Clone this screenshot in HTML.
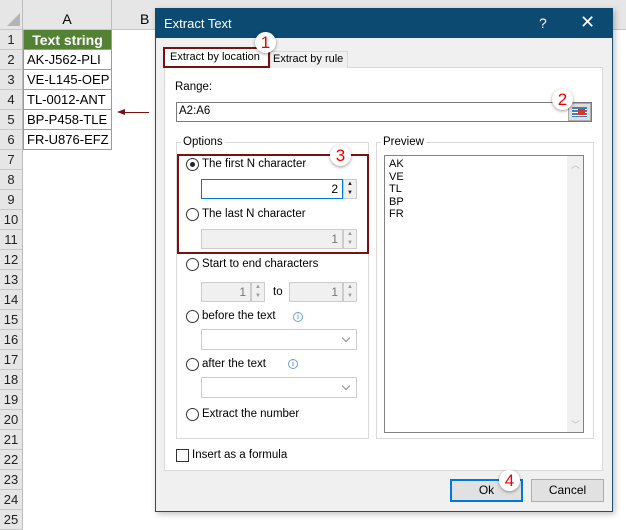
<!DOCTYPE html><html><head><style>
*{box-sizing:border-box;margin:0;padding:0}
body{width:626px;height:521px;position:relative;overflow:hidden;background:#fff;font-family:"Liberation Sans",sans-serif;font-size:12px;color:#000}
.a{position:absolute}
.rh{position:absolute;left:0;width:23px;height:20px;background:#e6e6e6;border-bottom:1px solid #c8c8c8;border-right:1px solid #bdbdbd;text-align:center;font-size:13px;line-height:20px;color:#222}
.cell{position:absolute;left:23px;width:89px;height:20px;border:1px solid #9a9a9a;border-top:none;font-size:13px;line-height:20px;padding-left:3px;white-space:nowrap;overflow:hidden}
.t{position:absolute;font-size:11.5px;white-space:nowrap}
.radio{position:absolute;width:13px;height:13px;border:1px solid #333;border-radius:50%;background:#fff}
.inp{position:absolute;height:20px;border:1px solid #adadad;background:#fff;text-align:right;padding-right:4px;line-height:18px}
.dis{background:#f0f0f0;border-color:#ccc;color:#777}
.spin{position:absolute;width:14px;height:20px;border:1px solid #ccc;background:#f0f0f0;font-size:6px;color:#999;text-align:center;line-height:9px}
.badge{position:absolute;width:21px;height:21px;border-radius:50%;background:#fff;box-shadow:0 1px 3px rgba(0,0,0,.4);color:#e00;font-size:17px;text-align:center;line-height:21px}
.info{position:absolute;width:10px;height:10px;border:1px solid #6a9fd4;border-radius:50%;color:#4a86c8;font-size:8px;line-height:8px;text-align:center;font-family:"Liberation Serif",serif}
.dd{position:absolute;height:21px;border:1px solid #ccc;background:#fff}
.dd:after{content:"";position:absolute;right:7px;top:5px;width:5px;height:5px;border-right:1px solid #888;border-bottom:1px solid #888;transform:rotate(45deg)}
</style></head><body>
<div class="a" style="left:0;top:0;width:626px;height:30px;background:#e6e6e6;border-bottom:1px solid #c8c8c8"></div>
<div class="a" style="left:0;top:0;width:23px;height:30px;border-right:1px solid #bdbdbd"></div>
<div class="a" style="left:7px;top:13px;width:0;height:0;border-left:13px solid transparent;border-bottom:13px solid #b5b5b5"></div>
<div class="a" style="left:23px;top:0;width:89px;height:30px;border-right:1px solid #bdbdbd;text-align:center;line-height:38px;font-size:14px">A</div>
<div class="a" style="left:112px;top:0;width:60px;height:30px;line-height:38px;padding-left:28px;font-size:14px">B</div>
<div class="rh" style="top:30px">1</div><div class="rh" style="top:50px">2</div><div class="rh" style="top:70px">3</div><div class="rh" style="top:90px">4</div><div class="rh" style="top:110px">5</div><div class="rh" style="top:130px">6</div><div class="rh" style="top:150px">7</div><div class="rh" style="top:170px">8</div><div class="rh" style="top:190px">9</div><div class="rh" style="top:210px">10</div><div class="rh" style="top:230px">11</div><div class="rh" style="top:250px">12</div><div class="rh" style="top:270px">13</div><div class="rh" style="top:290px">14</div><div class="rh" style="top:310px">15</div><div class="rh" style="top:330px">16</div><div class="rh" style="top:350px">17</div><div class="rh" style="top:370px">18</div><div class="rh" style="top:390px">19</div><div class="rh" style="top:410px">20</div><div class="rh" style="top:430px">21</div><div class="rh" style="top:450px">22</div><div class="rh" style="top:470px">23</div><div class="rh" style="top:490px">24</div><div class="rh" style="top:510px">25</div>
<div class="cell" style="top:30px;background:#548235;color:#fff;font-weight:bold;text-align:center;padding:0;font-size:14px">Text string</div>
<div class="cell" style="top:50px">AK-J562-PLI</div>
<div class="cell" style="top:70px">VE-L145-OEP</div>
<div class="cell" style="top:90px">TL-0012-ANT</div>
<div class="cell" style="top:110px">BP-P458-TLE</div>
<div class="cell" style="top:130px">FR-U876-EFZ</div>
<div class="a" style="left:122px;top:112px;width:27px;height:1px;background:#7b1010"></div>
<div class="a" style="left:117px;top:109px;width:0;height:0;border-top:3.5px solid transparent;border-bottom:3.5px solid transparent;border-right:8px solid #7b1010"></div>
<div class="a" style="left:155px;top:8px;width:458px;height:504px;background:#f0f0f0;border:1px solid #1d4f75;box-shadow:2px 2px 6px rgba(0,0,0,.25)"></div>
<div class="a" style="left:155px;top:8px;width:458px;height:30px;background:#0d4a72"></div>
<div class="t" style="left:164px;top:16px;color:#fff;font-size:13px">Extract Text</div>
<div class="t" style="left:539px;top:15px;color:#fff;font-size:14px">?</div>
<div class="t" style="left:580px;top:12px;color:#fff;font-size:18px">✕</div>
<div class="a" style="left:164px;top:67px;width:439px;height:404px;background:#fff;border:1px solid #d9d9d9"></div>
<div class="a" style="left:270px;top:51px;width:78px;height:17px;background:#f0f0f0;border:1px solid #d9d9d9;border-bottom:none"></div>
<div class="t" style="left:273px;top:53px;font-size:11px">Extract by rule</div>
<div class="a" style="left:163px;top:47px;width:107px;height:21px;background:#fff;border:2px solid #7b1010"></div>
<div class="t" style="left:170px;top:51px;font-size:11px">Extract by location</div>
<div class="t" style="left:175px;top:81px">Range:</div>
<div class="a" style="left:176px;top:102px;width:416px;height:20px;border:1px solid #7a7a7a;background:#fff"></div>
<div class="t" style="left:179px;top:105px">A2:A6</div>
<div class="a" style="left:568px;top:103px;width:23px;height:18px;background:#ddd;border:1px solid #aaa"></div>
<div class="a" style="left:572px;top:107px;width:15px;height:10px;background:repeating-linear-gradient(#4a7ab8 0 2px,#fff 2px 3px)"></div>
<div class="a" style="left:578px;top:109px;width:7px;height:6px;background:#d03a2a"></div>
<div class="a" style="left:176px;top:142px;width:193px;height:297px;border:1px solid #d9d9d9"></div>
<div class="t" style="left:181px;top:136px;background:#fff;padding:0 2px">Options</div>
<div class="a" style="left:376px;top:142px;width:218px;height:297px;border:1px solid #d9d9d9"></div>
<div class="t" style="left:381px;top:136px;background:#fff;padding:0 2px">Preview</div>
<div class="a" style="left:384px;top:155px;width:200px;height:278px;border:1px solid #828282;background:#fff"></div>
<div class="a" style="left:567px;top:156px;width:16px;height:276px;background:#f0f0f0"></div>
<div class="t" style="left:571px;top:158px;color:#bbb;font-size:9px">︿</div>
<div class="t" style="left:571px;top:418px;color:#bbb;font-size:9px">﹀</div>
<div class="t" style="left:389px;top:158px;font-size:11px;line-height:12.5px">AK<br>VE<br>TL<br>BP<br>FR</div>
<div class="a" style="left:177px;top:154px;width:192px;height:100px;border:2px solid #7b1010"></div>
<div class="radio" style="left:186px;top:158px"><div class="a" style="left:3px;top:3px;width:5px;height:5px;border-radius:50%;background:#222"></div></div>
<div class="t" style="left:202px;top:158px">The first N character</div>
<div class="inp" style="left:201px;top:179px;width:142px;border-color:#0078d7;color:#000">2</div>
<div class="spin" style="left:343px;top:179px;color:#222">▲<br>▼</div>
<div class="radio" style="left:186px;top:208px"></div>
<div class="t" style="left:202px;top:208px">The last N character</div>
<div class="inp dis" style="left:201px;top:229px;width:142px">1</div>
<div class="spin" style="left:343px;top:229px">▲<br>▼</div>
<div class="radio" style="left:186px;top:258px"></div>
<div class="t" style="left:202px;top:258px">Start to end characters</div>
<div class="inp dis" style="left:201px;top:282px;width:50px">1</div>
<div class="spin" style="left:251px;top:282px">▲<br>▼</div>
<div class="t" style="left:273px;top:286px">to</div>
<div class="inp dis" style="left:289px;top:282px;width:54px">1</div>
<div class="spin" style="left:343px;top:282px">▲<br>▼</div>
<div class="radio" style="left:186px;top:310px"></div>
<div class="t" style="left:202px;top:310px">before the text</div>
<div class="info" style="left:293px;top:312px">i</div>
<div class="dd" style="left:201px;top:329px;width:156px"></div>
<div class="radio" style="left:186px;top:358px"></div>
<div class="t" style="left:202px;top:358px">after the text</div>
<div class="info" style="left:288px;top:359px">i</div>
<div class="dd" style="left:201px;top:377px;width:156px"></div>
<div class="radio" style="left:186px;top:408px"></div>
<div class="t" style="left:202px;top:408px">Extract the number</div>
<div class="a" style="left:176px;top:449px;width:13px;height:13px;border:1px solid #333;background:#fff"></div>
<div class="t" style="left:192px;top:449px">Insert as a formula</div>
<div class="a" style="left:450px;top:479px;width:73px;height:23px;border:2px solid #0078d7;background:#e1e1e1;text-align:center;line-height:19px">Ok</div>
<div class="a" style="left:531px;top:479px;width:73px;height:23px;border:1px solid #adadad;background:#e1e1e1;text-align:center;line-height:21px">Cancel</div>
<div class="badge" style="left:255px;top:32px">1</div>
<div class="badge" style="left:552px;top:89px">2</div>
<div class="badge" style="left:330px;top:145px">3</div>
<div class="badge" style="left:499px;top:470px">4</div>
</body></html>
